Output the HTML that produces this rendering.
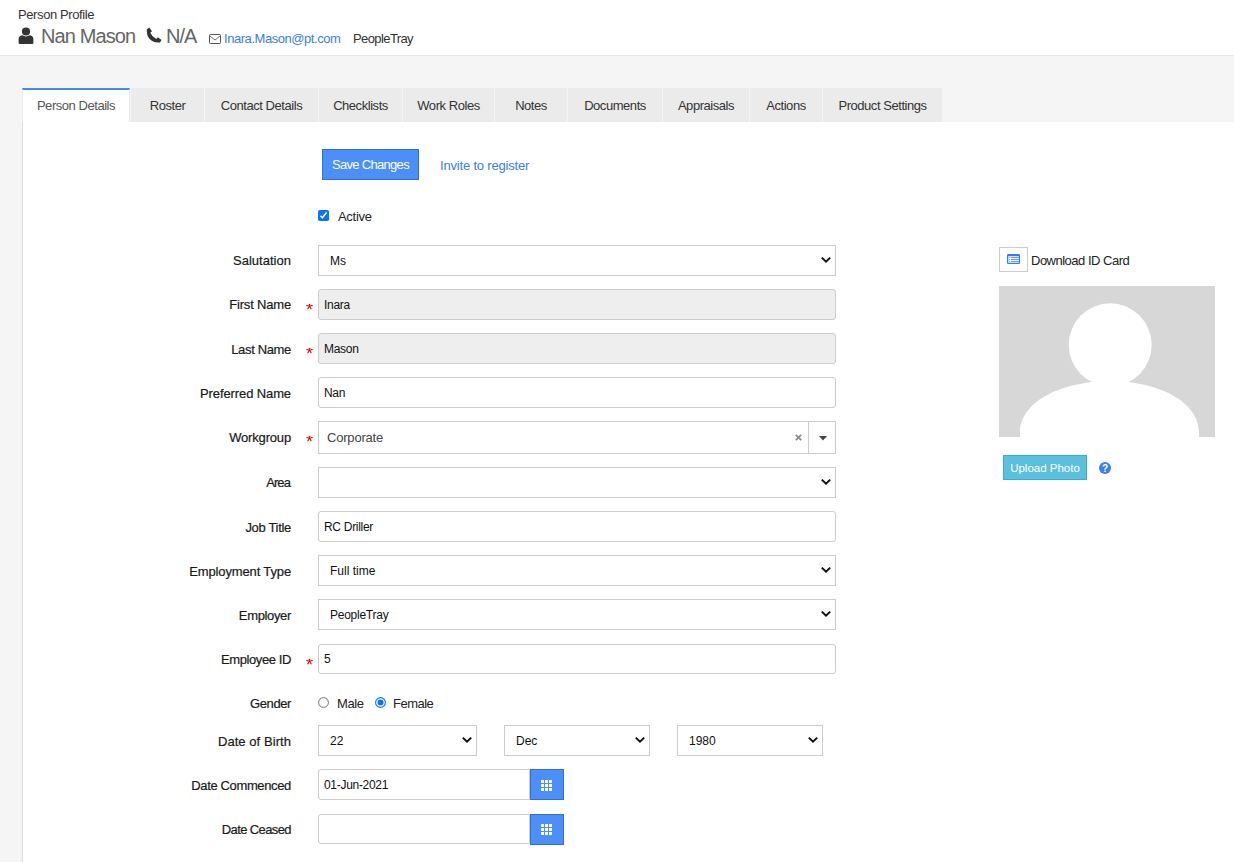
<!DOCTYPE html>
<html><head><meta charset="utf-8">
<style>
*{box-sizing:border-box;margin:0;padding:0}
html,body{width:1234px;height:862px;overflow:hidden;background:#f5f5f5;font-family:"Liberation Sans",sans-serif;color:#333}
.a{position:absolute;white-space:nowrap}
#hdr{position:absolute;left:0;top:0;width:1234px;height:56px;background:#fff;border-bottom:1px solid #e6e6e6}
.tab{position:absolute;top:88px;height:34px;background:#ebebeb;font-size:13px;color:#333;text-align:center;line-height:36px;letter-spacing:-0.45px}
.tab.act{background:#fff;border-top:2px solid #3d8fe6;border-left:1px solid #ececec;border-right:1px solid #e6e6e6;color:#555;line-height:32px}
#panel{position:absolute;left:22px;top:122px;width:1212px;height:740px;background:#fff;border-left:1px solid #ddd}
.lbl{position:absolute;right:943px;font-size:13px;font-weight:normal;color:#1a1a1a;white-space:nowrap;-webkit-text-stroke:0.2px #1a1a1a;letter-spacing:-0.25px}
.req{position:absolute;left:305px;color:#d9261c;font-size:12px}
.inp{position:absolute;left:318px;width:518px;height:31px;border:1px solid #ccc;border-radius:3px;background:#fff;font-size:12px;color:#111;padding:1px 0 0 5px;line-height:29px;letter-spacing:-0.3px}
.inp.ro{background:#eee}
.sel{position:absolute;left:318px;width:518px;height:31px;border:1px solid #ccc;background:#fff;font-size:12px;color:#111;padding:1px 0 0 11px;line-height:29px}
.chev{position:absolute;right:3px;top:10px;width:12px;height:9px}
</style></head><body>
<div id="hdr">
  <div class="a" style="left:18px;top:7px;font-size:13px;color:#333;letter-spacing:-0.4px">Person Profile</div>
  <svg class="a" style="left:18px;top:27px" width="16" height="18" viewBox="0 0 16 18"><circle cx="8" cy="4.5" r="4.1" fill="#333"/><path d="M0.6 15.8 L0.6 12.6 Q0.6 8.7 4.2 8.3 Q8 10.6 11.8 8.3 Q15.4 8.7 15.4 12.6 L15.4 15.8 Q15.4 17 14 17 L2 17 Q0.6 17 0.6 15.8Z" fill="#333"/></svg>
  <div class="a" style="left:41px;top:25px;font-size:20px;color:#666;letter-spacing:-0.9px">Nan Mason</div>
  <svg class="a" style="left:146px;top:27px" width="16" height="16" viewBox="0 0 16 16"><path d="M3.2 0.6 L6 4.2 L4.3 5.8 Q5.8 9.6 10.2 12 L11.9 10.3 L15.5 13 L14 15.4 Q8 16.2 3.6 12 Q0.2 8.2 0.9 2.2 Z" fill="#333"/></svg>
  <div class="a" style="left:166px;top:25px;font-size:20px;color:#666;letter-spacing:-1px">N/A</div>
  <svg class="a" style="left:209px;top:34px" width="12" height="10" viewBox="0 0 12 10"><rect x="0.5" y="0.5" width="11" height="9" rx="0.8" fill="none" stroke="#555" stroke-width="1"/><path d="M1 2 L6 6 L11 2" fill="none" stroke="#666" stroke-width="0.9"/></svg>
  <div class="a" style="left:224px;top:31px;font-size:13px;color:#3a7ef2;letter-spacing:-0.45px">Inara.Mason@pt.com</div>
  <div class="a" style="left:353px;top:31px;font-size:13px;color:#333;letter-spacing:-0.6px">PeopleTray</div>
</div>

<div class="tab act" style="left:22px;width:108px">Person Details</div>
<div class="tab" style="left:131px;width:73px">Roster</div>
<div class="tab" style="left:205px;width:113px">Contact Details</div>
<div class="tab" style="left:319px;width:83px">Checklists</div>
<div class="tab" style="left:403px;width:91px">Work Roles</div>
<div class="tab" style="left:495px;width:72px">Notes</div>
<div class="tab" style="left:568px;width:94px">Documents</div>
<div class="tab" style="left:663px;width:86px">Appraisals</div>
<div class="tab" style="left:750px;width:72px">Actions</div>
<div class="tab" style="left:823px;width:119px">Product Settings</div>

<div id="panel"></div>

<div class="a" style="left:322px;top:149px;width:97px;height:31px;background:#4d8ffa;border:1px solid #2f72c8;color:#fff;font-size:13px;text-align:center;line-height:29px;letter-spacing:-0.7px">Save Changes</div>
<div class="a" style="left:440px;top:158px;font-size:13px;color:#3a7ef2;letter-spacing:-0.18px">Invite to register</div>
<svg class="a" style="left:318px;top:210px" width="11" height="11" viewBox="0 0 11 11"><rect x="0" y="0" width="11" height="11" rx="1.8" fill="#0a74f6"/><path d="M2.4 5.8 L4.4 7.7 L8.6 2.6" fill="none" stroke="#fff" stroke-width="1.6"/></svg>
<div class="a" style="left:338px;top:209px;font-size:13px;color:#222;letter-spacing:-0.3px">Active</div>

<div class="lbl" style="top:253px;letter-spacing:0.02px">Salutation</div>
<div class="sel" style="top:245px">Ms<svg class="chev" viewBox="0 0 12 9"><path d="M1.8 1.6 L6 5.7 L10.2 1.6" fill="none" stroke="#111" stroke-width="2"/></svg></div>

<div class="lbl" style="top:297px;letter-spacing:-0.18px">First Name</div><svg class="a" style="left:305px;top:302px" width="8" height="8" viewBox="0 0 8 8"><g stroke="#e00" stroke-width="1.15" stroke-linecap="round"><line x1="4.5" y1="4.3" x2="4.5" y2="2.2"/><line x1="4.5" y1="4.3" x2="7.2" y2="3.5"/><line x1="4.5" y1="4.3" x2="6.1" y2="6.8"/><line x1="4.5" y1="4.3" x2="2.9" y2="6.8"/><line x1="4.5" y1="4.3" x2="1.8" y2="3.5"/></g></svg>
<div class="inp ro" style="top:289px">Inara</div>

<div class="lbl" style="top:342px;letter-spacing:-0.34px">Last Name</div><svg class="a" style="left:305px;top:346px" width="8" height="8" viewBox="0 0 8 8"><g stroke="#e00" stroke-width="1.15" stroke-linecap="round"><line x1="4.5" y1="4.3" x2="4.5" y2="2.2"/><line x1="4.5" y1="4.3" x2="7.2" y2="3.5"/><line x1="4.5" y1="4.3" x2="6.1" y2="6.8"/><line x1="4.5" y1="4.3" x2="2.9" y2="6.8"/><line x1="4.5" y1="4.3" x2="1.8" y2="3.5"/></g></svg>
<div class="inp ro" style="top:333px">Mason</div>

<div class="lbl" style="top:386px;letter-spacing:-0.11px">Preferred Name</div>
<div class="inp" style="top:377px">Nan</div>

<div class="lbl" style="top:430px;letter-spacing:-0.17px">Workgroup</div><svg class="a" style="left:305px;top:434px" width="8" height="8" viewBox="0 0 8 8"><g stroke="#e00" stroke-width="1.15" stroke-linecap="round"><line x1="4.5" y1="4.3" x2="4.5" y2="2.2"/><line x1="4.5" y1="4.3" x2="7.2" y2="3.5"/><line x1="4.5" y1="4.3" x2="6.1" y2="6.8"/><line x1="4.5" y1="4.3" x2="2.9" y2="6.8"/><line x1="4.5" y1="4.3" x2="1.8" y2="3.5"/></g></svg>
<div class="a" style="left:318px;top:421px;width:518px;height:33px;border:1px solid #ccc;background:#fff">
  <div class="a" style="left:8px;top:8px;font-size:13px;color:#444;letter-spacing:-0.2px">Corporate</div>
  <svg class="a" style="left:476px;top:12px" width="7" height="7" viewBox="0 0 7 7"><path d="M0.8 0.8 L6.2 6.2 M6.2 0.8 L0.8 6.2" stroke="#888" stroke-width="1.7"/></svg>
  <div class="a" style="left:489px;top:0;width:1px;height:31px;background:#ccc"></div>
  <svg class="a" style="left:500px;top:14px" width="8" height="5" viewBox="0 0 8 5"><path d="M0 0 L8 0 L4 4.5 Z" fill="#444"/></svg>
</div>

<div class="lbl" style="top:475px;letter-spacing:-0.9px;margin-right:1px">Area</div>
<div class="sel" style="top:467px"><svg class="chev" viewBox="0 0 12 9"><path d="M1.8 1.6 L6 5.7 L10.2 1.6" fill="none" stroke="#111" stroke-width="2"/></svg></div>

<div class="lbl" style="top:520px;letter-spacing:-0.31px">Job Title</div>
<div class="inp" style="top:511px">RC Driller</div>

<div class="lbl" style="top:564px;letter-spacing:-0.14px">Employment Type</div>
<div class="sel" style="top:555px">Full time<svg class="chev" viewBox="0 0 12 9"><path d="M1.8 1.6 L6 5.7 L10.2 1.6" fill="none" stroke="#111" stroke-width="2"/></svg></div>

<div class="lbl" style="top:608px;letter-spacing:-0.34px">Employer</div>
<div class="sel" style="top:599px;letter-spacing:-0.25px">PeopleTray<svg class="chev" viewBox="0 0 12 9"><path d="M1.8 1.6 L6 5.7 L10.2 1.6" fill="none" stroke="#111" stroke-width="2"/></svg></div>

<div class="lbl" style="top:652px;letter-spacing:-0.40px">Employee ID</div><svg class="a" style="left:305px;top:657px" width="8" height="8" viewBox="0 0 8 8"><g stroke="#e00" stroke-width="1.15" stroke-linecap="round"><line x1="4.5" y1="4.3" x2="4.5" y2="2.2"/><line x1="4.5" y1="4.3" x2="7.2" y2="3.5"/><line x1="4.5" y1="4.3" x2="6.1" y2="6.8"/><line x1="4.5" y1="4.3" x2="2.9" y2="6.8"/><line x1="4.5" y1="4.3" x2="1.8" y2="3.5"/></g></svg>
<div class="inp" style="top:644px;height:30px;padding-top:0">5</div>

<div class="lbl" style="top:696px;letter-spacing:-0.4px">Gender</div>
<svg class="a" style="left:318px;top:697px" width="11" height="11" viewBox="0 0 11 11"><circle cx="5.5" cy="5.5" r="4.9" fill="#fff" stroke="#707070" stroke-width="1"/></svg>
<div class="a" style="left:337px;top:696px;font-size:13px;color:#222;letter-spacing:-0.4px">Male</div>
<svg class="a" style="left:375px;top:697px" width="11" height="11" viewBox="0 0 11 11"><circle cx="5.5" cy="5.5" r="4.9" fill="#fff" stroke="#0a74f6" stroke-width="1.1"/><circle cx="5.5" cy="5.5" r="3" fill="#0a74f6"/></svg>
<div class="a" style="left:393px;top:696px;font-size:13px;color:#222;letter-spacing:-0.5px">Female</div>

<div class="lbl" style="top:734px;letter-spacing:0.06px">Date of Birth</div>
<div class="sel" style="top:725px;width:159px">22<svg class="chev" viewBox="0 0 12 9"><path d="M1.8 1.6 L6 5.7 L10.2 1.6" fill="none" stroke="#111" stroke-width="2"/></svg></div>
<div class="sel" style="top:725px;left:504px;width:146px">Dec<svg class="chev" viewBox="0 0 12 9"><path d="M1.8 1.6 L6 5.7 L10.2 1.6" fill="none" stroke="#111" stroke-width="2"/></svg></div>
<div class="sel" style="top:725px;left:677px;width:146px">1980<svg class="chev" viewBox="0 0 12 9"><path d="M1.8 1.6 L6 5.7 L10.2 1.6" fill="none" stroke="#111" stroke-width="2"/></svg></div>

<div class="lbl" style="top:778px;letter-spacing:-0.36px">Date Commenced</div>
<div class="inp" style="top:769px;width:212px;border-radius:3px 0 0 3px">01-Jun-2021</div>
<div class="a" style="left:530px;top:769px;width:34px;height:31px;background:#4d8ffa;border:1px solid #2f72c8"><svg class="a" style="left:10px;top:10px" width="11" height="11" viewBox="0 0 11 11"><g fill="#fff"><rect x="0" y="0" width="3" height="3"/><rect x="4" y="0" width="3" height="3"/><rect x="8" y="0" width="3" height="3"/><rect x="0" y="4" width="3" height="3"/><rect x="4" y="4" width="3" height="3"/><rect x="8" y="4" width="3" height="3"/><rect x="0" y="8" width="3" height="3"/><rect x="4" y="8" width="3" height="3"/><rect x="8" y="8" width="3" height="3"/></g></svg></div>

<div class="lbl" style="top:822px;letter-spacing:-0.60px">Date Ceased</div>
<div class="inp" style="top:814px;width:212px;height:30px;border-radius:3px 0 0 3px"></div>
<div class="a" style="left:530px;top:814px;width:34px;height:31px;background:#4d8ffa;border:1px solid #2f72c8"><svg class="a" style="left:10px;top:9px" width="11" height="11" viewBox="0 0 11 11"><g fill="#fff"><rect x="0" y="0" width="3" height="3"/><rect x="4" y="0" width="3" height="3"/><rect x="8" y="0" width="3" height="3"/><rect x="0" y="4" width="3" height="3"/><rect x="4" y="4" width="3" height="3"/><rect x="8" y="4" width="3" height="3"/><rect x="0" y="8" width="3" height="3"/><rect x="4" y="8" width="3" height="3"/><rect x="8" y="8" width="3" height="3"/></g></svg></div>

<!-- right column -->
<div class="a" style="left:999px;top:247px;width:29px;height:25px;border:1px solid #ccc;background:#fff"><svg class="a" style="left:7px;top:6px" width="13" height="11" viewBox="0 0 13 11"><rect x="0" y="0" width="13" height="10" rx="1.2" fill="#2f7cff"/><rect x="1.2" y="2.2" width="10.6" height="6.6" fill="#fff"/><g fill="#6f9cff"><rect x="3.8" y="3" width="8" height="1.1"/><rect x="3.8" y="5" width="8" height="1.1"/><rect x="3.8" y="7" width="8" height="1.1"/><rect x="1.8" y="3" width="1" height="1.1"/><rect x="1.8" y="5" width="1" height="1.1"/><rect x="1.8" y="7" width="1" height="1.1"/></g></svg></div>
<div class="a" style="left:1031px;top:253px;font-size:13px;color:#222;letter-spacing:-0.5px">Download ID Card</div>
<div class="a" style="left:999px;top:286px;width:216px;height:151px;background:#d7d7d7;overflow:hidden">
 <svg width="216" height="151" viewBox="0 0 216 151"><circle cx="111.2" cy="58.8" r="41.5" fill="#fff"/><path d="M21 152 L21 148 C20 114 66 95 111 95 C156 95 201 114 200 148 L200 152 Z" fill="#fff"/></svg>
</div>
<div class="a" style="left:1003px;top:455px;width:84px;height:25px;background:#5bc0de;border:1px solid #38acd4;color:#fff;font-size:11.5px;text-align:center;line-height:25px">Upload Photo</div>
<svg class="a" style="left:1099px;top:462px" width="13" height="13" viewBox="0 0 13 13"><circle cx="6" cy="6" r="6" fill="#3b7ff2"/><text x="6" y="9.7" font-size="10" font-weight="bold" fill="#fff" text-anchor="middle" font-family="Liberation Sans">?</text></svg>

</body></html>
